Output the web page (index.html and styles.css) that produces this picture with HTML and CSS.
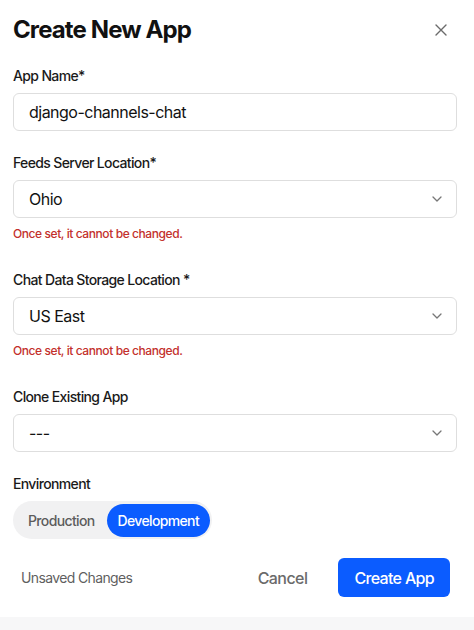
FILE: index.html
```html
<!DOCTYPE html>
<html lang="en">
<head>
<meta charset="utf-8">
<title>Create New App</title>
<link rel="stylesheet" href="styles.css">
</head>
<body>
<div class="dialog">
  <div class="header">
    <h1 class="title">Create New App</h1>
    <button class="close" aria-label="Close">
      <svg width="12" height="12" viewBox="0 0 12 12"><path d="M1 1L11 11M11 1L1 11" stroke="#6b6b6b" stroke-width="1.4" fill="none" stroke-linecap="round"/></svg>
    </button>
  </div>

  <div class="group">
    <div class="label">App Name*</div>
    <div class="field">django-channels-chat</div>
  </div>

  <div class="group group-err">
    <div class="label">Feeds Server Location*</div>
    <div class="field select">Ohio
      <svg class="chev" width="10" height="6" viewBox="0 0 10 6"><path d="M1 1L5 5L9 1" stroke="#777" stroke-width="1.3" fill="none" stroke-linecap="round" stroke-linejoin="round"/></svg>
    </div>
    <div class="error">Once set, it cannot be changed.</div>
  </div>

  <div class="group group-err">
    <div class="label">Chat Data Storage Location *</div>
    <div class="field select">US East
      <svg class="chev" width="10" height="6" viewBox="0 0 10 6"><path d="M1 1L5 5L9 1" stroke="#777" stroke-width="1.3" fill="none" stroke-linecap="round" stroke-linejoin="round"/></svg>
    </div>
    <div class="error">Once set, it cannot be changed.</div>
  </div>

  <div class="group">
    <div class="label">Clone Existing App</div>
    <div class="field select">---
      <svg class="chev" width="10" height="6" viewBox="0 0 10 6"><path d="M1 1L5 5L9 1" stroke="#777" stroke-width="1.3" fill="none" stroke-linecap="round" stroke-linejoin="round"/></svg>
    </div>
  </div>

  <div class="group group-env">
    <div class="label">Environment</div>
    <div class="toggle">
      <span class="seg">Production</span>
      <span class="seg active">Development</span>
    </div>
  </div>

  <div class="footer">
    <span class="unsaved">Unsaved Changes</span>
    <div class="actions">
      <button class="cancel">Cancel</button>
      <button class="primary">Create App</button>
    </div>
  </div>
</div>
<div class="band"></div>
</body>
</html>
```

FILE: styles.css
```css
* { box-sizing: border-box; }
html, body { margin: 0; padding: 0; background: #fff; }
body {
  font-family: Inter, "Noto Sans", sans-serif;
  color: #161616;
  letter-spacing: -0.04em;
  width: 474px;
  height: 630px;
  overflow: hidden;
  display: flex;
  flex-direction: column;
}
.dialog {
  padding: 14px 17px 0 13px;
  height: 617px;
}
.header {
  display: flex;
  justify-content: space-between;
  align-items: center;
  height: 32px;
  margin-bottom: 20px;
}
.title {
  margin: 0;
  font-size: 24px;
  line-height: 32px;
  font-weight: 700;
  letter-spacing: -0.037em;
  color: #111;
}
.close {
  border: 0;
  background: none;
  padding: 0;
  width: 24px;
  height: 24px;
  display: flex;
  align-items: center;
  justify-content: center;
  margin-right: 4px;
}
.group { margin-bottom: 22px; }
.group-err { margin-bottom: 28px; }
.label {
  font-size: 14px;
  line-height: 20px;
  font-weight: 500;
  color: #1a1a1a;
  margin-bottom: 7px;
}
.group:first-of-type .label { margin-bottom: 8px; }
.field {
  height: 38px;
  border: 1px solid #dedede;
  border-radius: 6px;
  padding: 0 15px;
  display: flex;
  align-items: center;
  font-size: 16px;
  letter-spacing: -0.032em;
  color: #111;
  background: #fff;
}
.select { justify-content: space-between; }
.chev { margin-right: -1px; }
.error {
  margin-top: 8px;
  font-size: 12px;
  line-height: 16px;
  font-weight: 500;
  letter-spacing: -0.035em;
  color: #c3302c;
}
.toggle {
  display: inline-flex;
  align-items: center;
  background: #f1f1f2;
  border-radius: 999px;
  height: 38px;
  padding: 0 2px 0 3px;
}
.seg {
  font-size: 14px;
  font-weight: 500;
  color: #5c5c5c;
  padding: 0 12px;
  height: 33px;
  line-height: 33px;
  border-radius: 999px;
}
.seg.active {
  background: #0b5cff;
  color: #fff;
  padding: 0 11px;
}
.group-env { margin-bottom: 19px; }
.footer {
  display: flex;
  align-items: center;
  justify-content: space-between;
  padding: 0 7px 0 8px;
  height: 39px;
}
.unsaved {
  font-size: 14px;
  letter-spacing: -0.045em;
  color: #5f5f5f;
}
.actions {
  display: flex;
  align-items: center;
}
.cancel {
  border: 0;
  background: none;
  font-family: inherit;
  font-size: 16px;
  font-weight: 500;
  letter-spacing: -0.035em;
  color: #6a6a6a;
  padding: 0;
  margin-right: 31px;
}
.primary {
  border: 0;
  background: #0b5cff;
  color: #fff;
  font-family: inherit;
  font-size: 16px;
  font-weight: 500;
  letter-spacing: -0.042em;
  height: 39px;
  padding: 0 16px;
  border-radius: 6px;
}
.band {
  flex: 1;
  background: #f7f7f8;
}
```
